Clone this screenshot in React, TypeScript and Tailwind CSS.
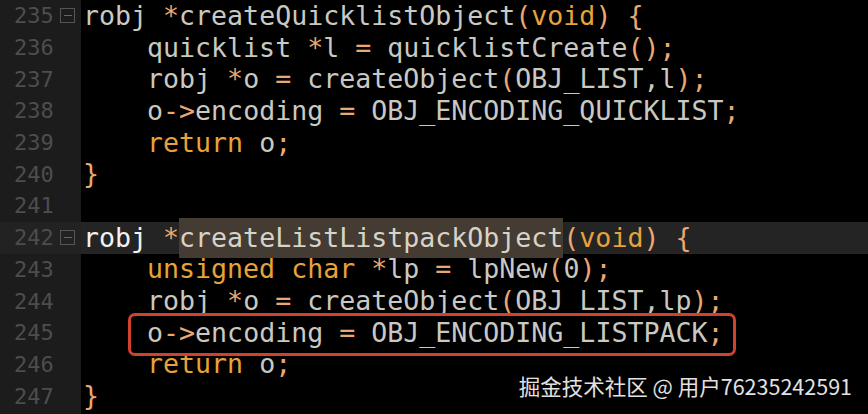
const KEYWORDS = new Set(["void", "return", "unsigned", "char"]);

type Tok = { t: string; c: string };

function tokenize(src: string): Tok[] {
  const out: Tok[] = [];
  const re = /([A-Za-z_][A-Za-z0-9_]*)|(->|[*=(){};])|(\s+)|(.)/g;
  let m: RegExpExecArray | null;
  while ((m = re.exec(src))) {
    if (m[1]) out.push({ t: m[1], c: KEYWORDS.has(m[1]) ? "text-[#e8a23a]" : "text-[#c9c9c1]" });
    else if (m[2]) out.push({ t: m[2], c: "text-[#eba873]" });
    else out.push({ t: m[0], c: "text-[#c9c9c1]" });
  }
  return out;
}

const lines: { n: number; code: string; fold?: boolean }[] = [
  { n: 235, code: "robj *createQuicklistObject(void) {", fold: true },
  { n: 236, code: "    quicklist *l = quicklistCreate();" },
  { n: 237, code: "    robj *o = createObject(OBJ_LIST,l);" },
  { n: 238, code: "    o->encoding = OBJ_ENCODING_QUICKLIST;" },
  { n: 239, code: "    return o;" },
  { n: 240, code: "}" },
  { n: 241, code: "" },
  { n: 242, code: "", fold: true },
  { n: 243, code: "    unsigned char *lp = lpNew(0);" },
  { n: 244, code: "    robj *o = createObject(OBJ_LIST,lp);" },
  { n: 245, code: "    o->encoding = OBJ_ENCODING_LISTPACK;" },
  { n: 246, code: "    return o;" },
  { n: 247, code: "}" },
];

function FoldMark() {
  return (
    <span className="flex h-[15px] w-[15px] items-center justify-center border border-[#555] ml-[5px]">
      <span className="h-px w-[8px] bg-[#666]" />
    </span>
  );
}

function CurrentLine() {
  return (
    <>
      <span className="text-[#f2f2f2]">robj </span>
      <span className="text-[#eba873]">*</span>
      <span className="bg-[#443b32] text-[#d8d3c8]">createListListpackObject</span>
      {tokenize("(void) {").map((k, i) => (
        <span key={i} className={k.c}>{k.t}</span>
      ))}
    </>
  );
}

export default function App() {
  return (
    <div className="relative flex h-[414px] w-[868px] overflow-hidden bg-black font-['DejaVu_Sans_Mono',monospace]">
      {/* gutter */}
      <div className="flex w-[81px] shrink-0 flex-col bg-[#1c1c1c]">
        {lines.map((l) => (
          <div
            key={l.n}
            className={`flex h-[31.7px] items-center pl-[14px] text-[22px] text-[#4d4d4d] ${l.n === 242 ? "bg-[#222]" : ""}`}
          >
            <span className="w-[41px]">{l.n}</span>
            {l.fold && <FoldMark />}
          </div>
        ))}
      </div>

      {/* code */}
      <div className="relative flex flex-1 flex-col">
        {lines.map((l) => (
          <div
            key={l.n}
            className={`flex h-[31.7px] items-center whitespace-pre pl-[2px] text-[26.6px] ${l.n === 242 ? "bg-[#242424]" : ""}`}
          >
            {l.n === 242
              ? <CurrentLine />
              : tokenize(l.code).map((k, i) => (
                  <span key={i} className={k.c}>{k.t}</span>
                ))}
          </div>
        ))}

        <div className="absolute left-[47px] top-[313px] h-[43px] w-[608px] rounded-[7px] border-[3px] border-[#d2412e]" />

        <div className="absolute bottom-[12px] right-[16px] font-['Noto_Sans_CJK_SC',sans-serif] text-[21.5px] text-[#e2e2e2]">
          掘金技术社区 @ 用户76235242591
        </div>
      </div>
    </div>
  );
}
